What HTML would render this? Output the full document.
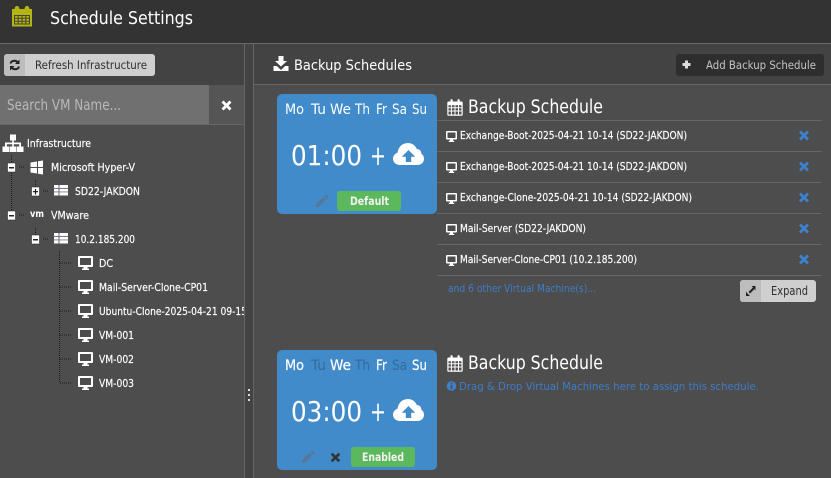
<!DOCTYPE html>
<html><head><meta charset="utf-8"><style>
html,body{margin:0;padding:0;width:831px;height:478px;overflow:hidden;background:#4d4d4d}
svg{display:block}
text{font-family:"DejaVu Sans","Liberation Sans",sans-serif;fill:#fff}
.t{font-size:11px;stroke:#fff;stroke-width:.18px}
.d{font-size:14.500px}
.h{font-size:18.500px}
.dot{stroke:#1c1c1c;stroke-width:1;stroke-dasharray:1 1;fill:none}
.b{fill:#fff}
</style></head><body>
<svg width="831" height="478" viewBox="0 0 831 478" xmlns="http://www.w3.org/2000/svg">
<defs>
<clipPath id="side"><rect x="0" y="0" width="244" height="478"/></clipPath>
<g id="mon"><path class="b" fill-rule="evenodd" d="M1 0H14a1 1 0 0 1 1 1V10a1 1 0 0 1-1 1H9.500V12.500H11V14H4V12.500H5.500V11H1a1 1 0 0 1-1-1V1a1 1 0 0 1 1-1ZM2 2V9H13V2Z"/></g>
<g id="mons"><path class="b" fill-rule="evenodd" d="M1 0H10a1 1 0 0 1 1 1V7.500a1 1 0 0 1-1 1H7V9.800H8.200V11H2.800V9.800H4V8.500H1a1 1 0 0 1-1-1V1a1 1 0 0 1 1-1ZM1.500 1.500V7H9.500V1.500Z"/></g>
<g id="x"><path d="M-4 -2.400 -2.400 -4 0 -1.600 2.400 -4 4 -2.400 1.600 0 4 2.400 2.400 4 0 1.600 -2.400 4 -4 2.400 -1.600 0Z"/></g>
<g id="cal"><path class="b" fill-rule="evenodd" d="M1.500 2.500H3.500V1.200a1 1 0 0 1 2.200 0V2.500H10.500V1.200a1 1 0 0 1 2.200 0V2.500H14.500a1.200 1.200 0 0 1 1.200 1.200V15.600a1.200 1.200 0 0 1-1.200 1.200H1.500a1.200 1.200 0 0 1-1.200-1.200V3.700a1.200 1.200 0 0 1 1.200-1.200ZM1.500 6.200V8.300H3.900V6.200ZM4.900 6.200V8.300H7.500V6.200ZM8.500 6.200V8.300H11V6.200ZM12 6.200V8.300H14.500V6.200ZM1.500 9.300V11.500H3.900V9.300ZM4.900 9.300V11.500H7.500V9.300ZM8.500 9.300V11.500H11V9.300ZM12 9.300V11.500H14.500V9.300ZM1.500 12.500V15.500H3.900V12.500ZM4.900 12.500V15.500H7.500V12.500ZM8.500 12.500V15.500H11V12.500ZM12 12.500V15.500H14.500V12.500Z"/></g>
<g id="cloud"><path class="b" fill-rule="evenodd" d="M7 22C3 22 0 19.200 0 15.700C0 12.800 1.900 10.500 4.500 9.700C5.100 4.200 9.400 0 14.800 0C18.900 0 22.300 2.400 23.800 6C27.400 6.300 28.200 8.400 28.400 10.700C30.100 11.800 31 13.600 31 15.700C31 19.200 28.200 22 24.700 22ZM15.500 7 8.800 13.800H12.800V19H18.200V13.800H22.200Z"/></g>
<g id="pen"><path d="M-6 6 -5.200 2.400 1.800 -4.600 4.600 -1.800 -2.400 5.200ZM2.800 -5.600 4 -6.800a1 1 0 0 1 1.400 0L6.800 -5.400a1 1 0 0 1 0 1.400L5.600 -2.800Z" fill="#53789c"/></g>
<g id="srv"><path class="b" d="M0 0H14V3H0ZM0 3.700H14V6.600H0ZM0 7.300H14V10.500H0Z"/><rect x="4.500" y="0" width="1" height="10.500" fill="#6a5a9a"/></g>
</defs>

<!-- header -->
<rect width="831" height="43" fill="#333"/>
<rect y="43" width="831" height="1" fill="#666"/>
<g transform="translate(12,6)">
<path fill="#b5b512" fill-rule="evenodd" d="M0 3H2.500C2.700 .8 3.800 0 5 0S7.300 .8 7.500 3H12.500C12.700 .8 13.800 0 15 0S17.300 .8 17.500 3H20V20.500H0Z"/>
<path stroke="#44443a" stroke-width="1" fill="none" d="M2.500 9.500H17.500V18H2.500ZM2.500 12.300H17.500M2.500 15.200H17.500M6.200 9.500V18M10 9.500V18M13.800 9.500V18"/>
</g>
<text x="50" y="24" font-size="18" textLength="143" lengthAdjust="spacingAndGlyphs" fill="#f5f5f5">Schedule Settings</text>

<!-- toolbars -->
<rect y="44" width="244" height="41" fill="#434343"/>
<rect x="253" y="44" width="578" height="40" fill="#434343"/>
<rect x="253" y="84" width="578" height="1" fill="#666"/>

<!-- splitter -->
<rect x="244" y="44" width="9" height="434" fill="#434343"/>
<rect x="244" y="44" width="1" height="434" fill="#666"/>
<rect x="253" y="44" width="1" height="434" fill="#666"/>
<rect x="248" y="389" width="2" height="2" fill="#ddd"/><rect x="248" y="394" width="2" height="2" fill="#ddd"/><rect x="248" y="399" width="2" height="2" fill="#ddd"/>

<!-- refresh -->
<rect x="4" y="54" width="151" height="22" rx="3" fill="#cfcfcf"/>
<path d="M7 54H25V76H7a3 3 0 0 1-3-3V57a3 3 0 0 1 3-3Z" fill="#bdbdbd"/>
<path fill="none" stroke="#222" stroke-width="2" d="M10.500 63.500C11 61.500 12.500 60.800 14.500 60.800C16 60.800 17 61.400 17.800 62.500M19 66.500C18.500 68.500 17 69.200 15 69.200C13.500 69.200 12.500 68.600 11.700 67.500"/>
<path fill="#222" d="M19.500 59.500V64H15ZM10 70.500V66H14.500Z"/>
<text x="35" y="69" font-size="11.500" textLength="112" lengthAdjust="spacingAndGlyphs" style="fill:#2f2f2f">Refresh Infrastructure</text>

<!-- search -->
<rect y="85" width="209" height="39" fill="#707070"/>
<rect x="209" y="85" width="35" height="39" fill="#555"/>
<rect y="124" width="244" height="1" fill="#666"/>
<text x="7" y="110" font-size="15" textLength="114" lengthAdjust="spacingAndGlyphs" style="fill:#b9b9b9">Search VM Name...</text>
<use href="#x" transform="translate(226.500,105.500) scale(1.250)" fill="#fff"/>

<!-- tree -->
<g class="dot">
<path d="M11.500 155V212M19 167H24M19 215H24M35.500 180V187M43 191H48M35.500 228V235M43 239H48M59.500 251V383M60 263H72M60 287H72M60 311H72M60 335H72M60 359H72M60 383H72"/>
</g>
<g>
<!-- infrastructure icon -->
<path class="b" d="M10 134.500H16V140.500H13.800V142.500H21V146.500H23.500V152H16.500V146.500H19.200V144.200H13.800V146.500H16V152H10V146.500H12.200V144.200H6.800V146.500H9.500V152H2.500V146.500H5V142.500H12.200V140.500H10Z"/>
<text class="t" x="27" y="147" textLength="64" lengthAdjust="spacingAndGlyphs">Infrastructure</text>

<rect x="7.500" y="163" width="8" height="9" fill="#fff" stroke="#333" stroke-width=".6"/><rect x="9" y="167" width="5" height="1.500" fill="#222"/>
<path class="b" d="M30.500 162.500 37 161.500V167H30.500ZM38 161.300 43 160.500V167H38ZM30.500 168H37V173.500L30.500 172.500ZM38 168H43V174.500L38 173.700Z"/>
<text class="t" x="51" y="171" textLength="84" lengthAdjust="spacingAndGlyphs">Microsoft Hyper-V</text>

<rect x="31.500" y="187" width="8" height="9" fill="#fff" stroke="#333" stroke-width=".6"/><path d="M33 191H38V192.300H33ZM34.900 189H36.100V194.500H34.900Z" fill="#222"/>
<use href="#srv" x="54" y="185"/>
<text class="t" x="75" y="195" textLength="65" lengthAdjust="spacingAndGlyphs">SD22-JAKDON</text>

<rect x="7.500" y="211" width="8" height="9" fill="#fff" stroke="#333" stroke-width=".6"/><rect x="9" y="215" width="5" height="1.500" fill="#222"/>
<text x="30" y="217" font-size="9.500" font-weight="bold" textLength="14" lengthAdjust="spacingAndGlyphs">vm</text>
<text class="t" x="51" y="219" textLength="38" lengthAdjust="spacingAndGlyphs">VMware</text>

<rect x="31.500" y="235" width="8" height="9" fill="#fff" stroke="#333" stroke-width=".6"/><rect x="33" y="239" width="5" height="1.500" fill="#222"/>
<use href="#srv" x="54" y="233"/>
<text class="t" x="75" y="243" textLength="60" lengthAdjust="spacingAndGlyphs">10.2.185.200</text>

<use href="#mon" x="78" y="256"/><text class="t" x="99" y="267" textLength="14" lengthAdjust="spacingAndGlyphs">DC</text>
<use href="#mon" x="78" y="280"/><text class="t" x="99" y="291" textLength="109" lengthAdjust="spacingAndGlyphs">Mail-Server-Clone-CP01</text>
<use href="#mon" x="78" y="304"/><g clip-path="url(#side)"><text class="t" x="99" y="315" textLength="148" lengthAdjust="spacingAndGlyphs">Ubuntu-Clone-2025-04-21 09-15</text></g>
<use href="#mon" x="78" y="328"/><text class="t" x="99" y="339" textLength="35" lengthAdjust="spacingAndGlyphs">VM-001</text>
<use href="#mon" x="78" y="352"/><text class="t" x="99" y="363" textLength="35" lengthAdjust="spacingAndGlyphs">VM-002</text>
<use href="#mon" x="78" y="376"/><text class="t" x="99" y="387" textLength="35" lengthAdjust="spacingAndGlyphs">VM-003</text>
</g>

<!-- right toolbar -->
<path class="b" fill-rule="evenodd" d="M278.500 56H283.500V61H287L281 66.500 275 61H278.500ZM273.500 66H276.800L281 70 285.200 66H288.500V71H273.500Z"/>
<text x="294" y="70" font-size="14.500" textLength="118" lengthAdjust="spacingAndGlyphs" fill="#f5f5f5">Backup Schedules</text>
<rect x="676" y="54" width="148" height="22" rx="3" fill="#2e2e2e"/>
<path d="M685 61.500H688V64H690.500V67H688V69.500H685V67H682.500V64H685Z" fill="#ddd" transform="translate(0,-1)"/>
<text x="706" y="69" font-size="11.500" textLength="110" lengthAdjust="spacingAndGlyphs" style="fill:#c4c4c4">Add Backup Schedule</text>

<!-- card 1 -->
<rect x="277" y="94" width="160" height="120" rx="5" fill="#428bca"/>
<text class="d" x="285" y="114" textLength="19" lengthAdjust="spacingAndGlyphs">Mo</text>
<text class="d" x="311" y="114" textLength="15" lengthAdjust="spacingAndGlyphs">Tu</text>
<text class="d" x="330" y="114" textLength="21" lengthAdjust="spacingAndGlyphs">We</text>
<text class="d" x="355" y="114" textLength="15" lengthAdjust="spacingAndGlyphs">Th</text>
<text class="d" x="376" y="114" textLength="11" lengthAdjust="spacingAndGlyphs">Fr</text>
<text class="d" x="392" y="114" textLength="15" lengthAdjust="spacingAndGlyphs">Sa</text>
<text class="d" x="412" y="114" textLength="15" lengthAdjust="spacingAndGlyphs">Su</text>
<text x="291" y="165" font-size="28" textLength="71" lengthAdjust="spacingAndGlyphs">01:00</text>
<text x="370" y="165" font-size="28" textLength="16" lengthAdjust="spacingAndGlyphs">+</text>
<use href="#cloud" x="393" y="143"/>
<use href="#pen" x="321.500" y="201.500"/>
<rect x="337" y="191" width="64" height="20" rx="3" fill="#5cb85c"/>
<text x="350" y="205" font-size="11.500" font-weight="bold" textLength="39" lengthAdjust="spacingAndGlyphs" style="fill:#f2f2f2">Default</text>

<!-- list 1 -->
<use href="#cal" x="447" y="99"/>
<text class="h" x="468" y="113" textLength="135" lengthAdjust="spacingAndGlyphs">Backup Schedule</text>
<g fill="#666">
<rect x="437" y="120" width="384" height="1"/><rect x="437" y="151" width="384" height="1"/><rect x="437" y="182" width="384" height="1"/><rect x="437" y="213" width="384" height="1"/><rect x="437" y="244" width="384" height="1"/><rect x="437" y="275" width="384" height="1"/>
</g>
<use href="#mons" x="446" y="131"/><text class="t" x="460" y="139" textLength="227" lengthAdjust="spacingAndGlyphs">Exchange-Boot-2025-04-21 10-14 (SD22-JAKDON)</text>
<use href="#mons" x="446" y="162"/><text class="t" x="460" y="170" textLength="227" lengthAdjust="spacingAndGlyphs">Exchange-Boot-2025-04-21 10-14 (SD22-JAKDON)</text>
<use href="#mons" x="446" y="193"/><text class="t" x="460" y="201" textLength="232" lengthAdjust="spacingAndGlyphs">Exchange-Clone-2025-04-21 10-14 (SD22-JAKDON)</text>
<use href="#mons" x="446" y="224"/><text class="t" x="460" y="232" textLength="126" lengthAdjust="spacingAndGlyphs">Mail-Server (SD22-JAKDON)</text>
<use href="#mons" x="446" y="255"/><text class="t" x="460" y="263" textLength="177" lengthAdjust="spacingAndGlyphs">Mail-Server-Clone-CP01 (10.2.185.200)</text>
<g fill="#3f80cc">
<use href="#x" transform="translate(804,135.500) scale(1.250)"/>
<use href="#x" transform="translate(804,166.500) scale(1.250)"/>
<use href="#x" transform="translate(804,197.500) scale(1.250)"/>
<use href="#x" transform="translate(804,228.500) scale(1.250)"/>
<use href="#x" transform="translate(804,259.500) scale(1.250)"/>
</g>
<text x="448" y="292" font-size="10.500" textLength="148" lengthAdjust="spacingAndGlyphs" style="fill:#3f7cc8">and 6 other Virtual Machine(s)...</text>
<rect x="740" y="280" width="76" height="22" rx="3" fill="#cfcfcf"/>
<path d="M743 280H761V302H743a3 3 0 0 1-3-3V283a3 3 0 0 1 3-3Z" fill="#bdbdbd"/>
<path d="M755.500 286H751.500L753 287.500 748.500 292 750 293.500 754.500 289 755.500 290.500ZM746 296H750L748.500 294.500 747 293 746 291.500Z" fill="#222"/>
<text x="771" y="295" font-size="12" textLength="37" lengthAdjust="spacingAndGlyphs" style="fill:#2f2f2f">Expand</text>

<!-- card 2 -->
<rect x="277" y="350" width="160" height="120" rx="5" fill="#428bca"/>
<text class="d" x="285" y="370" textLength="19" lengthAdjust="spacingAndGlyphs" stroke="#fff" stroke-width=".2">Mo</text>
<text class="d" x="311" y="370" textLength="15" lengthAdjust="spacingAndGlyphs" style="fill:#356a9c">Tu</text>
<text class="d" x="330" y="370" textLength="21" lengthAdjust="spacingAndGlyphs" stroke="#fff" stroke-width=".2">We</text>
<text class="d" x="355" y="370" textLength="15" lengthAdjust="spacingAndGlyphs" style="fill:#356a9c">Th</text>
<text class="d" x="376" y="370" textLength="11" lengthAdjust="spacingAndGlyphs" stroke="#fff" stroke-width=".2">Fr</text>
<text class="d" x="392" y="370" textLength="15" lengthAdjust="spacingAndGlyphs" style="fill:#356a9c">Sa</text>
<text class="d" x="412" y="370" textLength="15" lengthAdjust="spacingAndGlyphs" stroke="#fff" stroke-width=".2">Su</text>
<text x="291" y="421" font-size="28" textLength="71" lengthAdjust="spacingAndGlyphs">03:00</text>
<text x="370" y="421" font-size="28" textLength="16" lengthAdjust="spacingAndGlyphs">+</text>
<use href="#cloud" x="393" y="399"/>
<use href="#pen" x="307.500" y="457.500"/>
<use href="#x" transform="translate(335.500,457.500) scale(1.200)" fill="#333"/>
<rect x="351" y="447" width="64" height="20" rx="3" fill="#5cb85c"/>
<text x="362" y="461" font-size="11.500" font-weight="bold" textLength="42" lengthAdjust="spacingAndGlyphs" style="fill:#f2f2f2">Enabled</text>

<use href="#cal" x="447" y="355"/>
<text class="h" x="468" y="369" textLength="135" lengthAdjust="spacingAndGlyphs">Backup Schedule</text>
<circle cx="451.500" cy="386" r="4.800" fill="#3f80cc"/>
<rect x="450.700" y="382.800" width="1.600" height="1.500" fill="#4d4d4d"/><rect x="450.700" y="385" width="1.600" height="3.800" fill="#4d4d4d"/>
<text x="459" y="390" font-size="11" textLength="300" lengthAdjust="spacingAndGlyphs" style="fill:#3f7cc8">Drag &amp; Drop Virtual Machines here to assign this schedule.</text>
</svg>
</body></html>
